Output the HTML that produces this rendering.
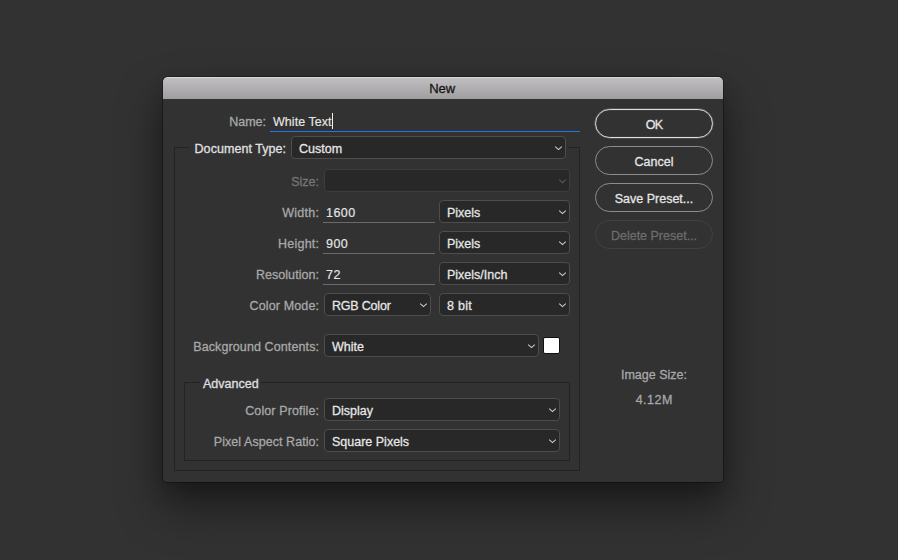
<!DOCTYPE html>
<html><head><meta charset="utf-8"><title>New</title>
<style>
*{box-sizing:border-box;margin:0;padding:0}
html,body{width:898px;height:560px;overflow:hidden;background:#323232}
body{font-family:"Liberation Sans",sans-serif;font-size:12.5px;color:#e4e4e4;position:relative;-webkit-text-stroke:0.28px}
.abs{position:absolute}
#dlg{position:absolute;left:163px;top:77px;width:560px;height:405px;background:#323232;border-radius:5px 5px 4px 4px;box-shadow:0 24px 46px 2px rgba(0,0,0,.40),0 10px 20px 0 rgba(0,0,0,.20),0 0 0 1px rgba(0,0,0,.30)}
#title{position:absolute;left:0;top:0;width:560px;height:22px;background:linear-gradient(#c0bec0,#a09ea0);border-radius:5px 5px 0 0;border-top:1px solid #dcdadc;color:#141414;text-align:center;line-height:14px;padding:4px 1.5px 0 0;font-size:13px}
.lbl{position:absolute;color:#a9a9a9;text-align:right;white-space:nowrap;height:23px;line-height:14px;padding-top:6px}
.sel{position:absolute;height:23px;background:#282828;border:1px solid #4d4d4d;border-radius:4px;line-height:14px;padding:5px 0 0 7px;color:#e6e6e6;white-space:nowrap}
.sel svg{position:absolute;right:2px;top:8px;width:9px;height:6px}
.inp{position:absolute;letter-spacing:0.45px;-webkit-text-stroke:0.15px;height:23px;border-bottom:1px solid #6b6b6b;line-height:14px;padding:6px 0 0 3px;color:#e6e6e6;white-space:nowrap}
.fs{position:absolute;border:1px solid #232323}
.btn{position:absolute;left:595px;width:118px;height:29px;border:1px solid #8c8c8c;border-radius:15px;text-align:center;line-height:14px;padding-top:8px;color:#e6e6e6;font-size:12.5px}
</style></head><body>
<div id="dlg"><div id="title">New</div></div>

<!-- fieldsets -->
<div class="fs" style="left:174px;top:147px;width:406px;height:324px"></div>
<div class="abs" style="left:189px;top:140px;width:379px;height:18px;background:#323232"></div>
<div class="fs" style="left:184px;top:382px;width:386px;height:79px"></div>
<div class="abs" style="left:200px;top:376px;width:61px;height:14px;background:#323232"></div>

<!-- name -->
<div class="lbl" style="left:180px;width:86px;top:109px">Name:</div>
<div class="inp" style="left:270px;top:109px;width:310px;border-bottom:1px solid #1f78e6;letter-spacing:0.05px">White Text<span style="display:inline-block;width:1px;height:16px;background:#f2f2f2;vertical-align:-3px;margin-top:-3px"></span></div>

<div class="lbl" style="left:180px;width:106px;top:136px;color:#e0e0e0;letter-spacing:0.05px;margin-left:0.05px">Document Type:</div>
<div class="sel" style="left:291px;top:136px;width:275px">Custom<svg viewBox="0 0 9 6"><path d="M1.2 1.65 L4.5 4.65 L7.8 1.65" fill="none" stroke="#cfcfcf" stroke-width="1.05"/></svg></div>

<div class="lbl" style="left:200px;width:119px;top:169px;color:#767676">Size:</div>
<div class="sel" style="left:324px;top:169px;width:246px;border-color:#3d3d3d"><svg viewBox="0 0 9 6"><path d="M1.2 1.65 L4.5 4.65 L7.8 1.65" fill="none" stroke="#565656" stroke-width="1.15"/></svg></div>

<div class="lbl" style="left:200px;width:119px;top:200px;letter-spacing:0.27px;margin-left:0.27px">Width:</div>
<div class="inp" style="left:323px;top:200px;width:112px">1600</div>
<div class="sel" style="left:439px;top:200px;width:131px">Pixels<svg viewBox="0 0 9 6"><path d="M1.2 1.65 L4.5 4.65 L7.8 1.65" fill="none" stroke="#cfcfcf" stroke-width="1.05"/></svg></div>

<div class="lbl" style="left:200px;width:119px;top:231px;letter-spacing:0.23px;margin-left:0.23px">Height:</div>
<div class="inp" style="left:323px;top:231px;width:112px">900</div>
<div class="sel" style="left:439px;top:231px;width:131px">Pixels<svg viewBox="0 0 9 6"><path d="M1.2 1.65 L4.5 4.65 L7.8 1.65" fill="none" stroke="#cfcfcf" stroke-width="1.05"/></svg></div>

<div class="lbl" style="left:200px;width:119px;top:262px;letter-spacing:0.055px;margin-left:0.055px">Resolution:</div>
<div class="inp" style="left:323px;top:262px;width:112px">72</div>
<div class="sel" style="left:439px;top:262px;width:131px">Pixels/Inch<svg viewBox="0 0 9 6"><path d="M1.2 1.65 L4.5 4.65 L7.8 1.65" fill="none" stroke="#cfcfcf" stroke-width="1.05"/></svg></div>

<div class="lbl" style="left:200px;width:119px;top:293px;letter-spacing:0.13px;margin-left:0.13px">Color Mode:</div>
<div class="sel" style="left:324px;top:293px;width:107px;letter-spacing:-0.2px">RGB Color<svg viewBox="0 0 9 6"><path d="M1.2 1.65 L4.5 4.65 L7.8 1.65" fill="none" stroke="#cfcfcf" stroke-width="1.05"/></svg></div>
<div class="sel" style="left:439px;top:293px;width:131px;letter-spacing:0.3px">8 bit<svg viewBox="0 0 9 6"><path d="M1.2 1.65 L4.5 4.65 L7.8 1.65" fill="none" stroke="#cfcfcf" stroke-width="1.05"/></svg></div>

<div class="lbl" style="left:180px;width:139px;top:334px;letter-spacing:0.11px;margin-left:0.11px">Background Contents:</div>
<div class="sel" style="left:324px;top:334px;width:215px">White<svg viewBox="0 0 9 6"><path d="M1.2 1.65 L4.5 4.65 L7.8 1.65" fill="none" stroke="#cfcfcf" stroke-width="1.05"/></svg></div>
<div class="abs" style="left:543px;top:337px;width:17px;height:17px;background:#fff;border:1px solid #111;border-radius:2px"></div>

<div class="abs" style="left:203px;top:371px;height:23px;line-height:14px;padding-top:6px;color:#e0e0e0">Advanced</div>

<div class="lbl" style="left:190px;width:129px;top:398px;letter-spacing:0.12px;margin-left:0.12px">Color Profile:</div>
<div class="sel" style="left:324px;top:398px;width:236px">Display<svg viewBox="0 0 9 6"><path d="M1.2 1.65 L4.5 4.65 L7.8 1.65" fill="none" stroke="#cfcfcf" stroke-width="1.05"/></svg></div>

<div class="lbl" style="left:190px;width:129px;top:429px;letter-spacing:0.055px;margin-left:0.055px">Pixel Aspect Ratio:</div>
<div class="sel" style="left:324px;top:429px;width:236px">Square Pixels<svg viewBox="0 0 9 6"><path d="M1.2 1.65 L4.5 4.65 L7.8 1.65" fill="none" stroke="#cfcfcf" stroke-width="1.05"/></svg></div>

<!-- buttons -->
<div class="btn" style="top:109px;border-color:#dedede;box-shadow:0 0 0 0.5px rgba(222,222,222,.35),inset 0 0 0 0.5px rgba(222,222,222,.12);letter-spacing:-0.7px">OK</div>
<div class="btn" style="top:146px">Cancel</div>
<div class="btn" style="top:183px">Save Preset...</div>
<div class="btn" style="top:220px;border-color:#414141;color:#6c6c6c">Delete Preset...</div>

<div class="abs" style="left:595px;width:118px;top:365px;text-align:center;height:20px;line-height:20px;color:#a8a8a8">Image Size:</div>
<div class="abs" style="left:595px;width:118px;top:390px;text-align:center;height:20px;line-height:20px;color:#a8a8a8;letter-spacing:0.5px;padding-left:0.5px">4.12M</div>
</body></html>
